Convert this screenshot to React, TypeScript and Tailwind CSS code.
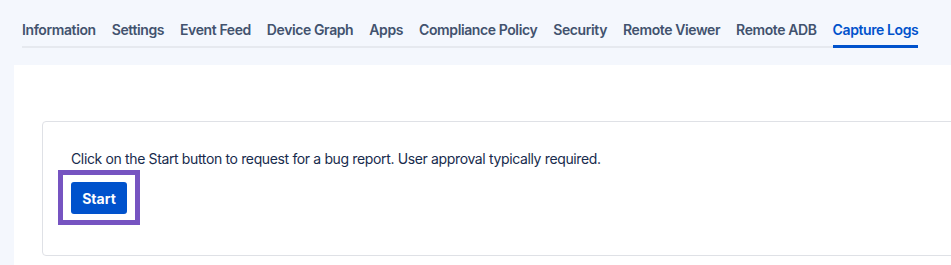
const tabs = [
  "Information",
  "Settings",
  "Event Feed",
  "Device Graph",
  "Apps",
  "Compliance Policy",
  "Security",
  "Remote Viewer",
  "Remote ADB",
  "Capture Logs",
];

export default function App() {
  const active = "Capture Logs";

  return (
    <div className="min-h-screen flex flex-col bg-[#f4f7fd] font-['Inter',sans-serif] overflow-hidden">
      {/* Tab bar */}
      <div className="pl-[22px] pt-[17px]">
        <nav className="inline-flex gap-4 border-b-2 border-[#e6e9ef]">
          {tabs.map((t) => {
            const isActive = t === active;
            return (
              <button
                key={t}
                type="button"
                className={
                  isActive
                    ? "text-[14px] leading-5 tracking-[-0.4px] font-semibold pb-[5px] -mb-[2px] border-b-[3px] border-[#0052cc] text-[#0052cc] whitespace-nowrap"
                    : "text-[14px] leading-5 tracking-[-0.4px] font-semibold pb-[5px] -mb-[2px] border-b-[3px] border-transparent text-[#42526e] whitespace-nowrap"
                }
              >
                {t}
              </button>
            );
          })}
        </nav>
      </div>

      {/* Content panel */}
      <div className="flex-1 mt-[17px] ml-[14px] bg-white pl-[28px] pt-[56px] overflow-hidden">
        <div className="w-[960px] border border-[#dfe1e6] rounded-[4px] pl-[28px] pt-[27px] pb-[41px]">
          <p className="text-[14px] leading-5 tracking-[-0.36px] text-[#172b4d]">
            Click on the Start button to request for a bug report. User approval
            typically required.
          </p>
          <div className="mt-[13px] relative inline-flex">
            <span className="absolute -left-[13px] -right-[13px] -top-[12px] -bottom-[11px] border-[5px] border-[#7654c1]" />
            <button
              type="button"
              className="relative h-[32px] w-[56px] rounded-[3px] bg-[#0052cc] text-white text-[14px] font-bold"
            >
              Start
            </button>
          </div>
        </div>
      </div>
    </div>
  );
}
